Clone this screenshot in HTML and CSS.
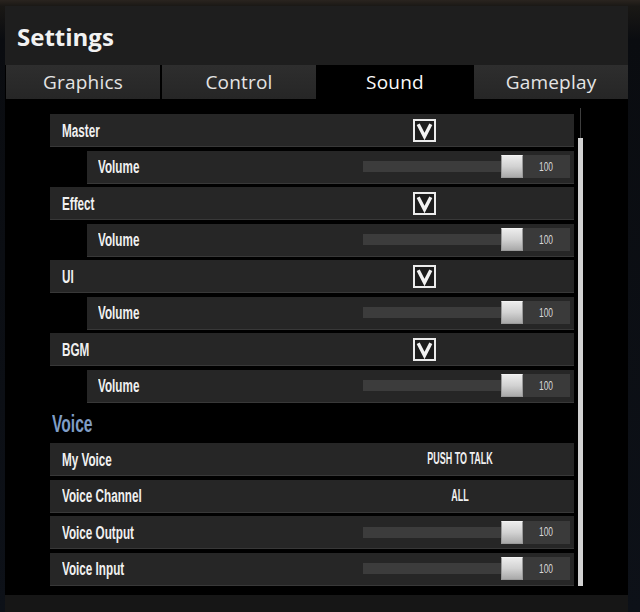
FILE: index.html
```html
<!DOCTYPE html>
<html>
<head>
<meta charset="utf-8">
<link rel="stylesheet" href="styles.css">
</head>
<body>
<div class="panel">
  <div class="title">Settings</div>
  <div class="tabs">
    <div class="tab">Graphics</div>
    <div class="tab">Control</div>
    <div class="tab active">Sound</div>
    <div class="tab">Gameplay</div>
  </div>
  <div class="content">
    <div class="list">
      <div class="row"><span class="label">Master</span><div class="ctrl"><span class="check"><svg viewBox="0 0 19 19" width="19" height="19"><polyline points="3.2,3.2 9.5,15.5 15.8,3.2" fill="none" stroke="#f2f2f2" stroke-width="3.4"/></svg></span></div></div>
      <div class="row sub"><span class="label">Volume</span><div class="ctrl"><div class="slider"><span class="track"></span><span class="thumb"></span><span class="val"><span class="num">100</span></span></div></div></div>
      <div class="row"><span class="label">Effect</span><div class="ctrl"><span class="check"><svg viewBox="0 0 19 19" width="19" height="19"><polyline points="3.2,3.2 9.5,15.5 15.8,3.2" fill="none" stroke="#f2f2f2" stroke-width="3.4"/></svg></span></div></div>
      <div class="row sub"><span class="label">Volume</span><div class="ctrl"><div class="slider"><span class="track"></span><span class="thumb"></span><span class="val"><span class="num">100</span></span></div></div></div>
      <div class="row"><span class="label">UI</span><div class="ctrl"><span class="check"><svg viewBox="0 0 19 19" width="19" height="19"><polyline points="3.2,3.2 9.5,15.5 15.8,3.2" fill="none" stroke="#f2f2f2" stroke-width="3.4"/></svg></span></div></div>
      <div class="row sub"><span class="label">Volume</span><div class="ctrl"><div class="slider"><span class="track"></span><span class="thumb"></span><span class="val"><span class="num">100</span></span></div></div></div>
      <div class="row"><span class="label">BGM</span><div class="ctrl"><span class="check"><svg viewBox="0 0 19 19" width="19" height="19"><polyline points="3.2,3.2 9.5,15.5 15.8,3.2" fill="none" stroke="#f2f2f2" stroke-width="3.4"/></svg></span></div></div>
      <div class="row sub"><span class="label">Volume</span><div class="ctrl"><div class="slider"><span class="track"></span><span class="thumb"></span><span class="val"><span class="num">100</span></span></div></div></div>
      <div class="section"><span class="section-text">Voice</span></div>
      <div class="row"><span class="label">My Voice</span><div class="ctrl"><span class="text">PUSH TO TALK</span></div></div>
      <div class="row"><span class="label">Voice Channel</span><div class="ctrl"><span class="text">ALL</span></div></div>
      <div class="row"><span class="label">Voice Output</span><div class="ctrl"><div class="slider"><span class="track"></span><span class="thumb"></span><span class="val"><span class="num">100</span></span></div></div></div>
      <div class="row"><span class="label">Voice Input</span><div class="ctrl"><div class="slider"><span class="track"></span><span class="thumb"></span><span class="val"><span class="num">100</span></span></div></div></div>
    </div>
    <div class="scroll"><span class="scroll-line"></span><span class="scroll-thumb"></span></div>
  </div>
  <div class="footer"></div>
</div>
</body>
</html>
```
FILE: styles.css
```css
html, body {
  margin: 0;
  padding: 0;
}
body {
  width: 640px;
  height: 612px;
  overflow: hidden;
  background: linear-gradient(180deg, #2a241f 0px, #1a1815 6px, #0a0c10 40px, #0d1118 100%);
}
.panel {
  margin: 6px 0 0 5px;
  width: 623px;
  height: 606px;
  background: #1e1e1e;
  display: flex;
  flex-direction: column;
  overflow: hidden;
}
.title {
  height: 59px;
  flex: none;
  display: flex;
  align-items: center;
  padding-left: 12px;
  padding-top: 1px;
  box-sizing: border-box;
  font-family: "Open Sans", sans-serif;
  font-weight: 700;
  font-size: 24px;
  color: #f2f2f2;
}
.tabs {
  flex: none;
  height: 34px;
  display: grid;
  grid-template-columns: repeat(4, 154px);
  column-gap: 2px;
  padding-left: 1px;
  background: #000;
}
.tab {
  display: flex;
  align-items: center;
  justify-content: center;
  background: linear-gradient(180deg, #2e2e2e, #262626);
  font-family: "Open Sans", sans-serif;
  font-size: 19px;
  color: #e4e4e4;
  letter-spacing: 0.2px;
}
.tab.active {
  background: #000;
  color: #fafafa;
}
.content {
  flex: none;
  height: 496px;
  background: #000;
  display: flex;
  align-items: flex-start;
  padding: 15px 0 0 45px;
  box-sizing: border-box;
  gap: 4px;
}
.list {
  width: 524px;
  display: flex;
  flex-direction: column;
  align-items: flex-end;
}
.row {
  width: 524px;
  height: 33px;
  box-sizing: border-box;
  background: #262626;
  border-bottom: 1px solid #383838;
  margin-bottom: 3.5px;
  display: flex;
  align-items: center;
  padding-right: 4px;
  font-family: "Liberation Sans", sans-serif;
}
.row:last-child {
  margin-bottom: 0;
}
.row.sub {
  width: 487px;
}
.label {
  flex: 1;
  margin-left: 12px;
  padding-top: 2px;
  font-size: 18px;
  font-weight: 700;
  color: #f0f0f0;
  transform: scaleX(0.65);
  transform-origin: left center;
  white-space: nowrap;
}
.sub .label {
  margin-left: 11px;
}
.ctrl {
  width: 220px;
  flex: none;
  height: 100%;
  display: flex;
  align-items: center;
}
.check {
  margin-left: 63px;
  width: 23px;
  height: 23px;
  box-sizing: border-box;
  border: 2px solid #ececec;
  background: #1c1c1c;
  display: flex;
}
.check svg {
  display: block;
}
.text {
  width: 100%;
  text-align: center;
  font-size: 16px;
  font-weight: 700;
  color: #f0f0f0;
  transform: scaleX(0.56);
  transform-origin: center center;
  white-space: nowrap;
}
.slider {
  margin-left: 13px;
  display: flex;
  align-items: center;
}
.track {
  width: 138px;
  height: 11px;
  background: #3c3c3c;
}
.thumb {
  width: 22px;
  height: 23px;
  box-sizing: border-box;
  background: linear-gradient(180deg, #ececec 0%, #d2d2d2 50%, #a9a9a9 100%);
  border: 1px solid #9a9a9a;
  border-top-color: #f4f4f4;
}
.val {
  width: 47px;
  height: 23px;
  background: #3a3a3a;
  display: flex;
  align-items: center;
  justify-content: center;
}
.num {
  font-size: 12px;
  color: #d8d8d8;
  transform: scaleX(0.7);
}
.section {
  align-self: flex-start;
  height: 37px;
  line-height: 37px;
  margin-top: -3.5px;
  padding-top: 3.5px;
  padding-left: 2px;
  font-family: "Liberation Sans", sans-serif;
  font-weight: 700;
  font-size: 23px;
  color: #7f9dc6;
}
.section-text {
  display: inline-block;
  transform: scaleX(0.68);
  transform-origin: left center;
}
.scroll {
  width: 5px;
  margin-top: -6px;
  height: 478px;
  display: flex;
  flex-direction: column;
  align-items: center;
}
.scroll-line {
  width: 1px;
  height: 30px;
  background: #3e3e3e;
}
.scroll-thumb {
  width: 5px;
  flex: 1;
  background: #d2d2d2;
}
.footer {
  flex: 1;
  background: #161616;
}
```
